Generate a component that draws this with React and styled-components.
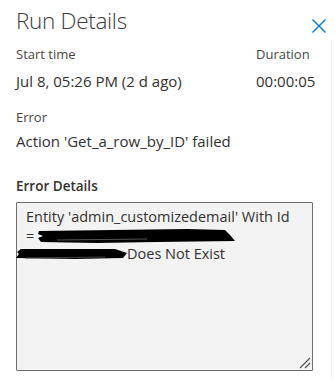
import React from "react";
import styled, { createGlobalStyle } from "styled-components";

const Global = createGlobalStyle`
  html, body { margin: 0; padding: 0; background: #fff; }
  body { font-family: "Open Sans", "Noto Sans", sans-serif; color: #323130; }
`;

const Panel = styled.div`
  width: 335px;
  height: 389px;
  box-sizing: border-box;
  display: flex;
  flex-direction: column;
  overflow: hidden;
`;

const Header = styled.div`
  height: 40px;
  display: flex;
  align-items: flex-start;
  justify-content: space-between;
  padding: 5px 9px 0 16px;
  box-sizing: border-box;
`;

const Title = styled.h1`
  margin: 0;
  font-size: 22.5px;
  font-weight: 300;
  line-height: 32px;
  color: #3b3a39;
  letter-spacing: -0.3px;
`;

const CloseButton = styled.button`
  border: 0;
  background: none;
  padding: 0;
  margin-top: 14px;
  width: 14px;
  height: 14px;
  display: flex;
  cursor: pointer;
`;

const Body = styled.div`
  width: 332px;
  height: 337px;
  box-sizing: border-box;
  border-right: 1px solid #ececec;
  padding: 4px 0 0 16px;
  display: flex;
  flex-direction: column;
`;

const Row = styled.div`
  display: grid;
  grid-template-columns: 240px auto;
`;

const Field = styled.div`
  display: flex;
  flex-direction: column;
  margin-bottom: ${(p) => p.$mb || 0}px;
`;

const Label = styled.div`
  font-size: 13px;
  line-height: 20px;
  color: #484644;
`;

const Value = styled.div`
  font-size: 15px;
  line-height: 22px;
  margin-top: ${(p) => p.$mt ?? 6}px;
  color: #323130;
`;

const SectionTitle = styled.div`
  font-size: 13.5px;
  font-weight: 600;
  line-height: 20px;
  color: #323130;
  margin-bottom: 6px;
`;

const DetailsBox = styled.div`
  position: relative;
  width: 297px;
  height: 169px;
  box-sizing: border-box;
  border: 1px solid #6e6e6e;
  border-radius: 1px;
  background: #f3f3f3;
  padding: 5px 8px 0 9px;
  font-size: 14.5px;
  line-height: 18.5px;
  color: #323130;
`;

const Line = styled.div`
  display: flex;
  align-items: center;
  white-space: nowrap;
  height: 18.5px;
`;

const Redact = styled.svg`
  flex: none;
  margin-left: ${(p) => p.$ml || 0}px;
  margin-right: ${(p) => p.$mr || 0}px;
`;

const Grip = styled.svg`
  position: absolute;
  right: 1px;
  bottom: 1px;
`;

function Blob1() {
  return (
    <Redact width="199" height="16" viewBox="0 0 199 16" $ml="3">
      <path d="M2 3 L150 1 L188 2 L193 7 L198 13 L120 14 L60 15 L4 14 L1 10 L6 8 L1 6 Z" fill="#000" />
      <path d="M20 12 L110 11" stroke="#555" strokeWidth="1" />
    </Redact>
  );
}

function Blob2() {
  return (
    <Redact width="113" height="12" viewBox="0 0 113 12" $ml="-11" $mr="-1">
      <path d="M6 1 L100 1 L112 5 L108 10 L60 11 L1 10 L4 6 L2 4 Z" fill="#000" />
      <path d="M10 10 L90 9" stroke="#444" strokeWidth="1" />
    </Redact>
  );
}

export default function App() {
  return (
    <>
      <Global />
      <Panel>
        <Header>
          <Title>Run Details</Title>
          <CloseButton aria-label="Close">
            <svg width="14" height="14" viewBox="0 0 14 14">
              <path d="M0.5 0.5 L13.5 13.5 M13.5 0.5 L0.5 13.5" stroke="#0078d4" strokeWidth="1.4" fill="none" />
            </svg>
          </CloseButton>
        </Header>
        <Body>
          <Row>
            <Field $mb="15">
              <Label>Start time</Label>
              <Value>Jul 8, 05:26 PM (2 d ago)</Value>
            </Field>
            <Field>
              <Label>Duration</Label>
              <Value>00:00:05</Value>
            </Field>
          </Row>
          <Field $mb="24">
            <Label>Error</Label>
            <Value $mt="3">Action 'Get_a_row_by_ID' failed</Value>
          </Field>
          <SectionTitle>Error Details</SectionTitle>
          <DetailsBox>
            <Line>Entity 'admin_customizedemail' With Id</Line>
            <Line>
              = <Blob1 />
            </Line>
            <Line>
              <Blob2 />
              Does Not Exist
            </Line>
            <Grip width="13" height="13" viewBox="0 0 13 13">
              <path d="M2 12 L12 2 M7 12 L12 7" stroke="#555" strokeWidth="1.2" fill="none" />
            </Grip>
          </DetailsBox>
        </Body>
      </Panel>
    </>
  );
}
